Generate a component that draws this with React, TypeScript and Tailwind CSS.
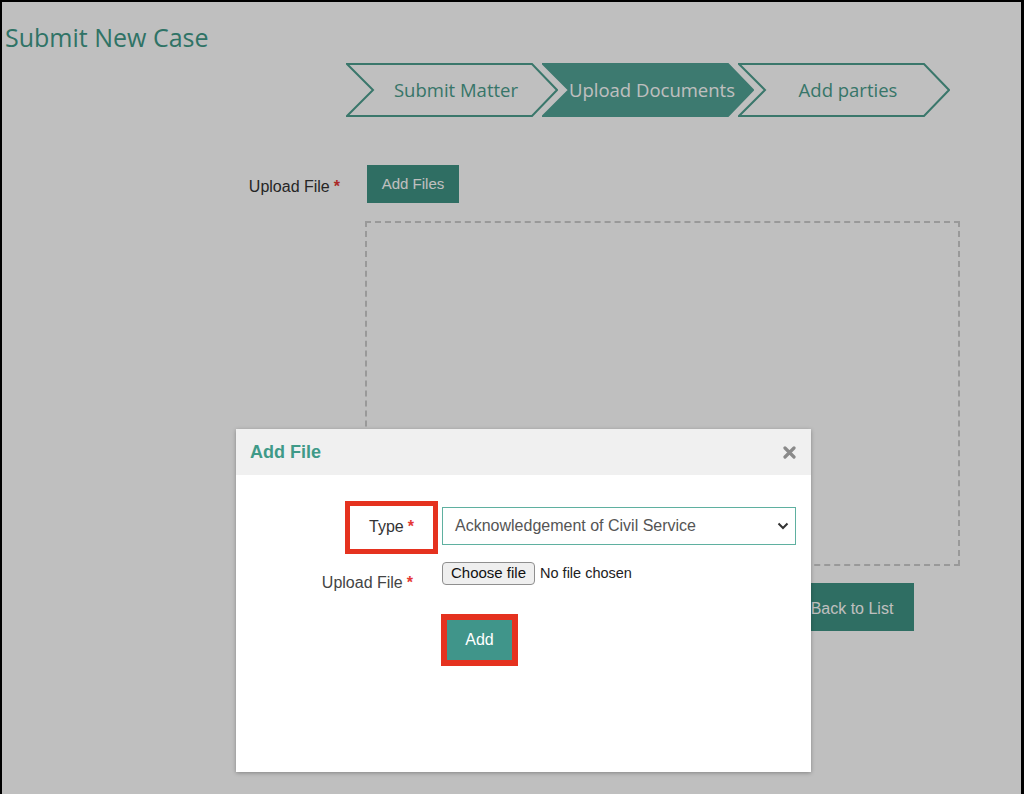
import React from 'react';

const STEPS = [
  { label: 'Submit Matter', active: false },
  { label: 'Upload Documents', active: true },
  { label: 'Add parties', active: false },
];

function Step({ label, active, first }: { label: string; active: boolean; first: boolean }) {
  return (
    <div className={first ? 'relative flex h-[54px] w-[212px] items-center justify-center pl-[8px]' : 'relative -ml-[16px] flex h-[54px] w-[212px] items-center justify-center pl-[8px]'}>
      <svg className="absolute inset-0" width="212" height="54" viewBox="0 0 212 54">
        <polygon
          points="1,1 186,1 211,27 186,53 1,53 27,27"
          fill={active ? '#52a396' : 'none'}
          stroke={active ? '#52a396' : '#4e9f8f'}
          strokeWidth="2"
        />
      </svg>
      <span className={active ? 'relative text-[18.5px] text-white' : 'relative text-[18.5px] text-[#4a9d8c]'}>{label}</span>
    </div>
  );
}

function Req() {
  return <span className="ml-[4px] font-bold text-[#e53935]">*</span>;
}

function AddFileModal() {
  return (
    <div className="absolute left-[234px] top-[427px] h-[343px] w-[575px] bg-white shadow-[0_1px_4px_rgba(0,0,0,0.3)]">
      <div className="flex h-[46px] items-center justify-between bg-[#f0f0f0] pl-[14px] pr-[15px]">
        <span className="text-[18px] font-bold text-[#3f9a88]">Add File</span>
        <svg width="13" height="13" viewBox="0 0 13 13">
          <path d="M2 2 L11 11 M11 2 L2 11" stroke="#8a8a8a" strokeWidth="3.2" strokeLinecap="round" />
        </svg>
      </div>

      {/* Type */}
      <div className="mt-[26px] flex items-center">
        <div className="flex w-[206px] justify-end pr-[4px]">
          <div className="flex h-[53px] items-center border-[5px] border-[#e5321f] px-[19px] pb-[2px] text-[16px] text-[#333]">
            Type<Req />
          </div>
        </div>
        <div className="mb-[4px] flex h-[38px] w-[354px] items-center justify-between border border-[#5fb0a0] pl-[12px] pr-[6px] text-[16px] text-[#555]">
          <span>Acknowledgement of Civil Service</span>
          <svg width="12" height="8" viewBox="0 0 12 8">
            <path d="M1.5 1.5 L6 6 L10.5 1.5" fill="none" stroke="#333" strokeWidth="2" />
          </svg>
        </div>
      </div>

      {/* Upload file */}
      <div className="mt-[8px] flex items-start">
        <div className="w-[206px] pr-[29px] pt-[11px] text-right text-[16px] leading-[20px] text-[#444]">
          Upload File<Req />
        </div>
        <div className="flex items-center">
          <span className="flex h-[23px] items-center rounded-[4px] border border-[#8f8f8f] bg-[#efefef] px-[8px] text-[15px] text-[#111]">
            Choose file
          </span>
          <span className="ml-[5px] text-[14.5px] text-[#222]">No file chosen</span>
        </div>
      </div>

      <div className="mt-[21px] pl-[205px]">
        <div className="inline-block border-[6px] border-[#e5321f]">
          <button className="flex h-[40px] w-[65px] items-center justify-center bg-[#40958a] text-[16px] text-white">
            Add
          </button>
        </div>
      </div>
    </div>
  );
}

export default function App() {
  return (
    <div className="relative h-[794px] w-[1024px] overflow-hidden border-l-2 border-r-[3px] border-t-2 border-black bg-white font-['Liberation_Sans',Arial,sans-serif]">
      <h1 className="pl-[3px] pt-[19px] font-['Open_Sans',sans-serif] text-[25px] leading-8 text-[#3f9a88]">
        Submit New Case
      </h1>

      <div className="ml-[344px] mt-[10px] flex font-['Open_Sans',sans-serif]">
        {STEPS.map((s, i) => (
          <Step key={s.label} label={s.label} active={s.active} first={i === 0} />
        ))}
      </div>

      <div className="mt-[48px] flex items-center">
        <div className="w-[363px] pr-[25px] pt-[5px] text-right text-[16px] text-[#333]">
          Upload File<Req />
        </div>
        <button className="ml-[2px] h-[38px] w-[92px] bg-[#3f9384] text-[15px] text-white">Add Files</button>
      </div>

      <div className="ml-[363px] mt-[18px] h-[345px] w-[595px] border-2 border-dashed border-[#cccccc]" />

      <button className="ml-[788px] mt-[17px] h-[48px] w-[124px] bg-[#3f9384] pt-[3px] text-[16px] text-white">Back to List</button>

      <div className="absolute inset-0 bg-black/25" />
      <AddFileModal />
    </div>
  );
}
